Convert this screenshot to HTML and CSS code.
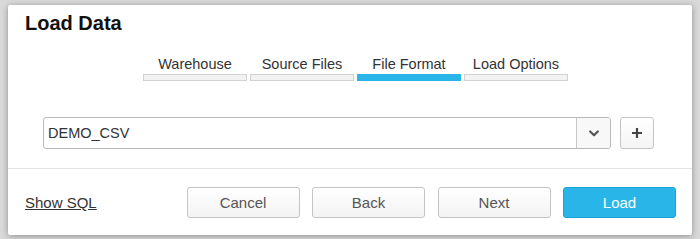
FILE: index.html
```html
<!DOCTYPE html>
<html lang="en">
<head>
<meta charset="utf-8">
<title>Load Data</title>
<link rel="stylesheet" href="styles.css">
</head>
<body>
<div class="dialog">
  <h1 class="title">Load Data</h1>
  <div class="steps">
    <div class="step"><span class="step-label">Warehouse</span><div class="step-bar"></div></div>
    <div class="step"><span class="step-label">Source Files</span><div class="step-bar"></div></div>
    <div class="step"><span class="step-label">File Format</span><div class="step-bar step-bar-active"></div></div>
    <div class="step"><span class="step-label">Load Options</span><div class="step-bar"></div></div>
  </div>
  <div class="field-row">
    <div class="select">
      <span class="select-value">DEMO_CSV</span>
      <span class="select-caret">
        <svg width="10" height="7" viewBox="0 0 10 7"><path d="M1.2 1.5 L5 5.2 L8.8 1.5" fill="none" stroke="#555" stroke-width="2.2" stroke-linecap="round" stroke-linejoin="round"/></svg>
      </span>
    </div>
    <button class="icon-btn" type="button">
      <svg width="12" height="12" viewBox="0 0 12 12"><path d="M6 1 V11 M1 6 H11" fill="none" stroke="#444" stroke-width="2.2" stroke-linecap="butt"/></svg>
    </button>
  </div>
  <div class="divider"></div>
  <div class="footer">
    <a class="show-sql" href="#">Show SQL</a>
    <div class="actions">
      <button class="btn" type="button">Cancel</button>
      <button class="btn" type="button">Back</button>
      <button class="btn" type="button">Next</button>
      <button class="btn btn-primary" type="button">Load</button>
    </div>
  </div>
</div>
</body>
</html>
```

FILE: styles.css
```css
html, body {
  margin: 0;
  padding: 0;
}
body {
  background: #d9d9d9;
  font-family: "Liberation Sans", Arial, sans-serif;
  width: 700px;
  height: 239px;
  overflow: hidden;
}
.dialog {
  margin: 5px 0 0 8px;
  width: 684px;
  height: 230px;
  background: #fff;
  border-radius: 2px;
  box-shadow: 0 1px 6px rgba(0, 0, 0, 0.35);
  display: flex;
  flex-direction: column;
}
.title {
  margin: 0;
  padding: 6px 17px 0;
  font-size: 20px;
  line-height: 24px;
  font-weight: bold;
  color: #111;
}
.steps {
  margin-top: 20px;
  padding-left: 135px;
  display: flex;
  gap: 3px;
}
.step {
  width: 104px;
  display: flex;
  flex-direction: column;
  align-items: stretch;
}
.step-label {
  text-align: center;
  font-size: 14.5px;
  line-height: 18px;
  color: #333;
}
.step-bar {
  margin-top: 1px;
  height: 5px;
  border: 1px solid #d2d2d2;
  background: #f2f2f2;
}
.step-bar-active {
  background: #29b5e8;
  border-color: #29b5e8;
}
.field-row {
  margin-top: 36px;
  padding-left: 35px;
  display: flex;
  gap: 9px;
}
.select {
  width: 568px;
  height: 32px;
  box-sizing: border-box;
  border: 1px solid #b9b9b9;
  border-radius: 3px;
  display: flex;
  align-items: stretch;
  overflow: hidden;
}
.select-value {
  flex: 1;
  padding-left: 4px;
  font-size: 14.5px;
  line-height: 30px;
  color: #333;
}
.select-caret {
  width: 33px;
  border-left: 1px solid #c8c8c8;
  background: #f8f8f8;
  display: flex;
  align-items: center;
  justify-content: center;
}
.icon-btn {
  width: 34px;
  height: 32px;
  box-sizing: border-box;
  border: 1px solid #c4c4c4;
  border-radius: 3px;
  background: linear-gradient(#ffffff, #f4f4f4);
  padding: 0;
  display: flex;
  align-items: center;
  justify-content: center;
}
.divider {
  margin-top: 19px;
  height: 1px;
  background: #e3e3e3;
}
.footer {
  margin-top: 18px;
  padding: 0 16px 0 17px;
  display: flex;
  align-items: center;
  justify-content: space-between;
}
.show-sql {
  font-size: 15px;
  color: #333;
  text-decoration: underline;
}
.actions {
  display: flex;
  gap: 12.5px;
}
.btn {
  width: 113px;
  height: 31px;
  box-sizing: border-box;
  border: 1px solid #c4c4c4;
  border-radius: 3px;
  background: linear-gradient(#ffffff, #f3f3f3);
  font-family: "Liberation Sans", Arial, sans-serif;
  font-size: 15px;
  color: #555;
  padding: 0;
}
.btn-primary {
  background: #29b5e8;
  border-color: #1ba3d6;
  color: #fff;
}
```
